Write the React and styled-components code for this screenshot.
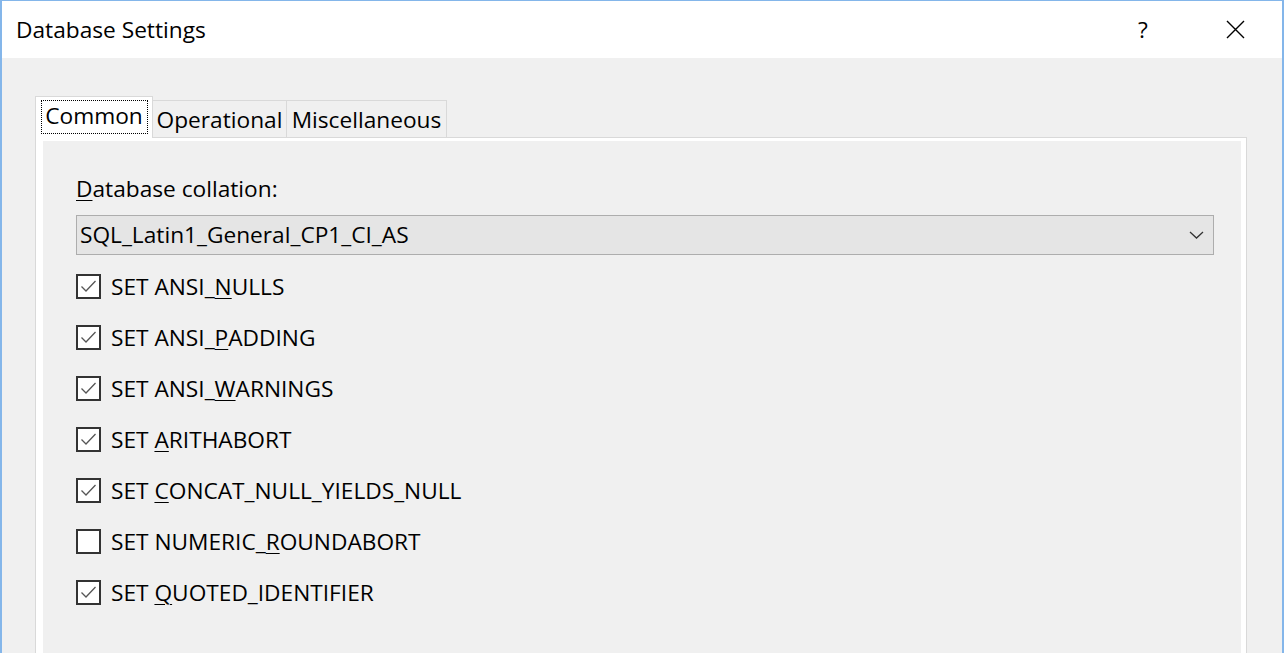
import { createGlobalStyle, styled } from "styled-components";

const GlobalStyle = createGlobalStyle`
  html, body {
    margin: 0;
    padding: 0;
    background: #f0f0f0;
  }
  body {
    font-family: "Open Sans", "Noto Sans", sans-serif;
    font-size: 22.7px;
    color: #000;
  }
`;

const options = [
  { pre: "SET ANSI_", key: "N", post: "ULLS", checked: true },
  { pre: "SET ANSI_", key: "P", post: "ADDING", checked: true },
  { pre: "SET ANSI_", key: "W", post: "ARNINGS", checked: true },
  { pre: "SET ", key: "A", post: "RITHABORT", checked: true },
  { pre: "SET ", key: "C", post: "ONCAT_NULL_YIELDS_NULL", checked: true },
  { pre: "SET NUMERIC_", key: "R", post: "OUNDABORT", checked: false },
  { pre: "SET ", key: "Q", post: "UOTED_IDENTIFIER", checked: true },
];

const tabs = [
  { label: "Common", width: 118, active: true },
  { label: "Operational", width: 134 },
  { label: "Miscellaneous", width: 160 },
];

const App = () => {
  return (
    <Window>
      <GlobalStyle />
      <TitleBar>
        <Title>Database Settings</Title>
        <HelpButton>?</HelpButton>
        <CloseButton>
          <svg width="19" height="19" viewBox="0 0 19 19">
            <path d="M1 1 L18 18 M18 1 L1 18" stroke="#000" strokeWidth="1.4" />
          </svg>
        </CloseButton>
      </TitleBar>
      <Body>
        <TabStrip>
          {tabs.map((t) => (
            <Tab key={t.label} $active={t.active} $w={t.width}>
              {t.active ? <Focus>{t.label}</Focus> : t.label}
            </Tab>
          ))}
        </TabStrip>
        <TabPage>
          <Content>
            <Label>
              <u>D</u>atabase collation:
            </Label>
            <Combo>
              <span>SQL_Latin1_General_CP1_CI_AS</span>
              <svg width="15" height="8" viewBox="0 0 15 8">
                <path d="M1 1 L7.5 7 L14 1" fill="none" stroke="#333" strokeWidth="1.3" />
              </svg>
            </Combo>
            <Options>
              {options.map((o) => (
                <Option key={o.pre + o.key}>
                  <Box>
                    {o.checked && (
                      <svg width="21" height="21" viewBox="0 0 21 21">
                        <path d="M3.5 10.5 L8 15 L17.5 5" fill="none" stroke="#555" strokeWidth="1.3" />
                      </svg>
                    )}
                  </Box>
                  <span>
                    {o.pre}
                    <u>{o.key}</u>
                    {o.post}
                  </span>
                </Option>
              ))}
            </Options>
          </Content>
        </TabPage>
      </Body>
    </Window>
  );
};

const Window = styled.div`
  height: 100vh;
  box-sizing: border-box;
  border-top: 1px solid #84b6ea;
  border-left: 2px solid #84b6ea;
  border-right: 2px solid #84b6ea;
  display: flex;
  flex-direction: column;
  overflow: hidden;
  u {
    text-decoration: underline;
    text-underline-offset: 3px;
    text-decoration-thickness: 1px;
  }
`;

const TitleBar = styled.div`
  height: 57px;
  flex-shrink: 0;
  background: #fff;
  display: flex;
  align-items: center;
`;

const Title = styled.div`
  flex: 1;
  padding-left: 14px;
  padding-top: 1px;
  line-height: 28px;
`;

const HelpButton = styled.div`
  width: 90px;
  text-align: center;
  line-height: 28px;
`;

const CloseButton = styled.div`
  width: 94px;
  display: flex;
  justify-content: center;
  align-items: center;
`;

const Body = styled.div`
  flex: 1;
  display: flex;
  flex-direction: column;
  padding: 38px 35px 0 33px;
`;

const TabStrip = styled.div`
  display: flex;
  align-items: flex-end;
  position: relative;
  z-index: 1;
`;

const Tab = styled.div`
  box-sizing: border-box;
  width: ${(p) => p.$w}px;
  height: ${(p) => (p.$active ? 42 : 37)}px;
  margin-bottom: ${(p) => (p.$active ? -1 : 0)}px;
  background: ${(p) => (p.$active ? "#fff" : "#f0f0f0")};
  border: 1px solid #d9d9d9;
  border-bottom: none;
  border-left: ${(p) => (p.$active ? "1px solid #d9d9d9" : "none")};
  display: flex;
  align-items: center;
  justify-content: center;
  line-height: 28px;
  padding-top: ${(p) => (p.$active ? 0 : 1)}px;
`;

const Focus = styled.span`
  box-sizing: border-box;
  width: 107px;
  height: 34px;
  border: 1px dotted #000;
  display: flex;
  align-items: center;
  justify-content: center;
  margin-top: -2px;
  padding-bottom: 1px;
`;

const TabPage = styled.div`
  flex: 1;
  min-height: 600px;
  background: #fff;
  border: 1px solid #d9d9d9;
  padding: 3px 5px 0 7px;
  display: flex;
`;

const Content = styled.div`
  flex: 1;
  background: #f0f0f0;
  padding: 34px 27px 0 33px;
  display: flex;
  flex-direction: column;
`;

const Label = styled.div`
  line-height: 28px;
`;

const Combo = styled.div`
  margin-top: 12px;
  box-sizing: border-box;
  height: 40px;
  background: #e5e5e5;
  border: 1px solid #adadad;
  display: flex;
  align-items: center;
  justify-content: space-between;
  padding: 0 9px 0 3px;
  line-height: 28px;
`;

const Options = styled.div`
  margin-top: 19px;
  display: flex;
  flex-direction: column;
  gap: 26px;
`;

const Option = styled.div`
  display: flex;
  align-items: center;
  gap: 10px;
  height: 25px;
  line-height: 28px;
`;

const Box = styled.div`
  box-sizing: border-box;
  width: 25px;
  height: 25px;
  border: 2px solid #333;
  background: #fff;
  display: flex;
  align-items: center;
  justify-content: center;
`;

export default App;
